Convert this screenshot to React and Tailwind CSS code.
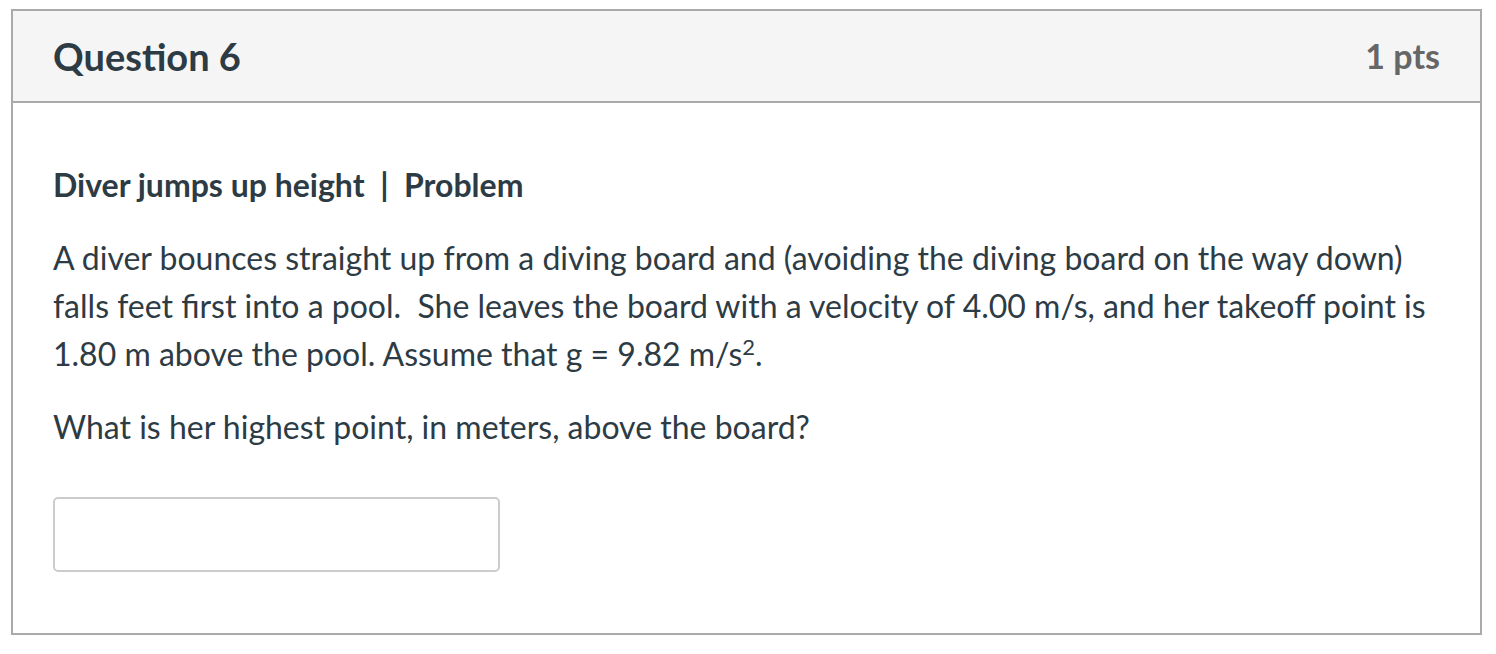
export default function App() {
  return (
    <div className="w-[1496px] h-[654px] bg-white pt-[9px] pl-[11px]" style={{ fontFamily: 'Lato, "Noto Sans", sans-serif' }}>
      <div className="w-[1471px] h-[626px] border-2 border-[#aaaaaa] flex flex-col">
        <div className="h-[92px] bg-[#f5f5f5] border-b-2 border-[#aaaaaa] flex items-center justify-between pl-[40px] pr-[40px]">
          <div className="text-[38px] font-bold text-[#2d3b45] leading-none">Question 6</div>
          <div className="text-[34px] font-bold text-[#666666] leading-none">1 pts</div>
        </div>
        <div className="pl-[40px] pr-[40px] pt-[62px] text-[#2d3b45]">
          <div className="text-[32px] font-bold leading-[40px]">Diver jumps up height &nbsp;|&nbsp; Problem</div>
          <div className="mt-[29px] text-[32px] leading-[48px]">
            A diver bounces straight up from a diving board and (avoiding the diving board on the way down) falls feet first into a pool.&nbsp; She leaves the board with a velocity of 4.00 m/s, and her takeoff point is 1.80 m above the pool. Assume that g = 9.82 m/s<sup className="text-[22px] leading-none">2</sup>.
          </div>
          <div className="mt-[25px] text-[32px] leading-[48px]">What is her highest point, in meters, above the board?</div>
          <div className="mt-[46px] w-[447px] h-[75px] border-2 border-[#cccccc] rounded-[5px] bg-white"></div>
        </div>
      </div>
    </div>
  );
}
